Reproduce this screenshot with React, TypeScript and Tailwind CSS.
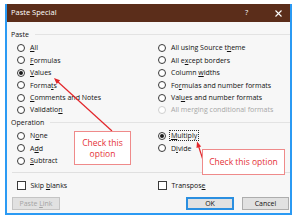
import type { ReactNode } from 'react'

// "&" marks the access key, which is drawn underlined
function Accel({ text }: { text: string }) {
  const i = text.indexOf('&')
  if (i < 0) return <>{text}</>
  return (
    <>
      {text.slice(0, i)}
      <span className="underline underline-offset-1">{text[i + 1]}</span>
      {text.slice(i + 2)}
    </>
  )
}

function Radio({ checked, disabled }: { checked?: boolean; disabled?: boolean }) {
  return (
    <span
      className={`w-[8px] h-[8px] shrink-0 rounded-full border bg-white flex items-center justify-center ${
        disabled ? 'border-[#cfcfcf]' : 'border-[#3a3a3a]'
      }`}
    >
      {checked && <span className="w-[4px] h-[4px] rounded-full bg-[#1a1a1a]" />}
    </span>
  )
}

interface OptionProps {
  label: string
  checked?: boolean
  disabled?: boolean
  focus?: boolean
}

function Option({ label, checked, disabled, focus }: OptionProps) {
  return (
    <div className="h-[12.4px] flex items-center gap-[5px]">
      <Radio checked={checked} disabled={disabled} />
      <span
        className={`leading-none ${disabled ? 'text-[#a6a6a6]' : ''} ${
          focus ? 'border border-dotted border-[#333] px-[1px] -ml-[2px] py-[1px]' : ''
        }`}
      >
        <Accel text={label} />
      </span>
    </div>
  )
}

function SectionLabel({ text }: { text: string }) {
  return (
    <div className="h-[10px] flex items-center gap-[6px] pl-[4px]">
      <span className="leading-none">{text}</span>
      <div className="flex-1 h-px bg-[#e3e3e3]" />
    </div>
  )
}

function Checkbox({ label }: { label: string }) {
  return (
    <div className="h-[12px] flex items-center gap-[5px]">
      <span className="w-[8.5px] h-[8.5px] shrink-0 border border-[#3a3a3a] bg-white" />
      <span className="leading-none">
        <Accel text={label} />
      </span>
    </div>
  )
}

function Button({ children, className }: { children: ReactNode; className: string }) {
  return (
    <div className={`h-[13px] flex items-center justify-center leading-none bg-[#e1e1e1] ${className}`}>
      {children}
    </div>
  )
}

const pasteLeft: OptionProps[] = [
  { label: '&All' },
  { label: '&Formulas' },
  { label: '&Values', checked: true },
  { label: 'Forma&ts' },
  { label: '&Comments and Notes' },
  { label: 'Validatio&n' },
]

const pasteRight: OptionProps[] = [
  { label: 'All using Source t&heme' },
  { label: 'All e&xcept borders' },
  { label: 'Column &widths' },
  { label: 'Fo&rmulas and number formats' },
  { label: 'Val&ues and number formats' },
  { label: 'All merging conditional formats', disabled: true },
]

const opLeft: OptionProps[] = [{ label: 'N&one' }, { label: 'A&dd' }, { label: '&Subtract' }]
const opRight: OptionProps[] = [{ label: '&Multiply', checked: true, focus: true }, { label: 'D&ivide' }]

export default function App() {
  return (
    <div className="relative w-[300px] h-[223px] bg-white pt-[4px] pl-[5px] font-['Open_Sans',sans-serif] text-[7px] text-[#111]">
      <div className="w-[287px] h-[211px] flex flex-col border-x-2 border-b-2 border-[#2b9af3]">
        {/* title bar */}
        <div className="h-[18px] shrink-0 flex items-center pl-[4px] pr-[6.7px] bg-[#5b2d1a] text-white">
          <span className="leading-none text-[7.5px]">Paste Special</span>
          <span className="ml-auto w-[10px] text-center leading-none text-[7.5px]">?</span>
          <span className="ml-[21.6px] w-[10px] flex justify-center">
            <svg width="7" height="7" viewBox="0 0 7 7">
              <path d="M0.5 0.5L6.5 6.5M6.5 0.5L0.5 6.5" stroke="white" strokeWidth="1.1" />
            </svg>
          </span>
        </div>

        <div className="flex-1 flex flex-col bg-[#f7f7f7] pt-[7px]">
          <SectionLabel text="Paste" />
          <div className="mt-[2.8px] flex pl-[10px]">
            <div className="w-[141px] flex flex-col">
              {pasteLeft.map((o) => (
                <Option key={o.label} {...o} />
              ))}
            </div>
            <div className="flex flex-col">
              {pasteRight.map((o) => (
                <Option key={o.label} {...o} />
              ))}
            </div>
          </div>

          <div className="mt-[1.5px]">
            <SectionLabel text="Operation" />
          </div>
          <div className="mt-[2.1px] flex pl-[10px]">
            <div className="w-[141px] flex flex-col">
              {opLeft.map((o) => (
                <Option key={o.label} {...o} />
              ))}
            </div>
            <div className="flex flex-col">
              {opRight.map((o) => (
                <Option key={o.label} {...o} />
              ))}
            </div>
          </div>

          <div className="mt-[5.5px] ml-[5px] h-px bg-[#e0e0e0]" />

          <div className="mt-[6px] flex pl-[10px]">
            <div className="w-[141px]">
              <Checkbox label="Skip &blanks" />
            </div>
            <Checkbox label="Transpos&e" />
          </div>

          <div className="mt-[6px] flex pl-[5px] pr-[1px]">
            <Button className="w-[48px] border border-[#c4c4c4] text-[#a3a3a3]">
              <span>
                Paste <Accel text="&Link" />
              </span>
            </Button>
            <Button className="ml-auto w-[48px] border-2 border-[#2b8fe0]">OK</Button>
            <Button className="ml-[8px] w-[47px] border border-[#adadad]">Cancel</Button>
          </div>
        </div>
      </div>

      {/* annotations */}
      <svg className="absolute inset-0 pointer-events-none" width="300" height="223">
        <line x1="112" y1="131" x2="57" y2="81" stroke="#e3262b" strokeWidth="1.2" />
        <polygon points="54,78 60.1,80.2 56.7,83.9" fill="#e3262b" />
        <line x1="203" y1="160" x2="198.5" y2="146" stroke="#e3262b" strokeWidth="1.2" />
        <polygon points="197,141.5 201.2,146.4 196.5,148" fill="#e3262b" />
      </svg>
      <div className="absolute left-[74px] top-[131px] w-[57px] h-[34px] border border-[#ef8a8a] bg-white flex flex-col items-center justify-center text-[8.5px] leading-[11.3px] text-[#e53238]">
        <span>Check this</span>
        <span>option</span>
      </div>
      <div className="absolute left-[202px] top-[149px] w-[83px] h-[26px] border border-[#ef8a8a] bg-white flex items-center justify-center text-[8.5px] leading-none text-[#e53238]">
        Check this option
      </div>
    </div>
  )
}
